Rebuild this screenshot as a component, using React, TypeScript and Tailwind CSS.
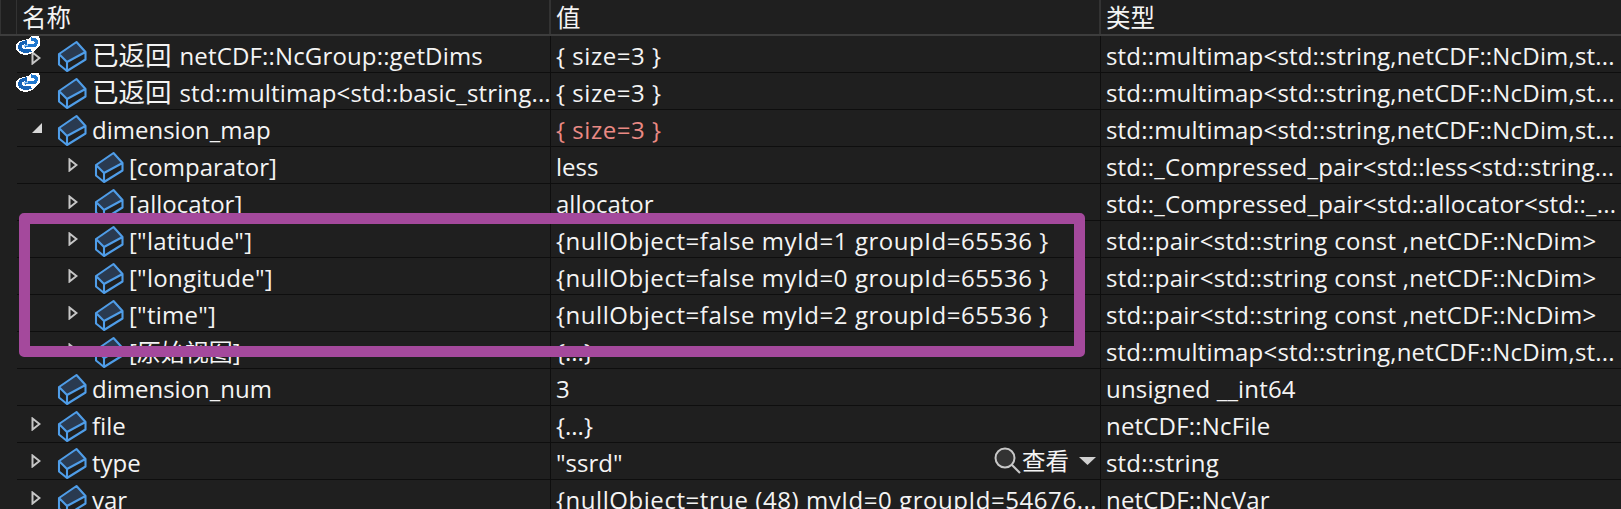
const FONT = "font-['Open_Sans','Noto_Sans_CJK_SC',sans-serif]";

function Cube() {
  return (
    <svg width="30" height="32" viewBox="0 0 30 32" className="mt-[4px] block shrink-0">
      <path d="M2 14 L19.5 2 L28.5 12 L10 22 Z" fill="#2a3a50" />
      <path d="M2 14 L19.5 2 L28.5 12 L28.5 19.5 L10 31 L2 24.5 Z M2 14 L10 22 L28.5 12 M10 22 L10 31" fill="none" stroke="#4f9de8" strokeWidth="2.1" strokeLinejoin="round" />
    </svg>
  );
}

function Closed() {
  return (
    <svg width="10" height="14" viewBox="0 0 10 14" className="block">
      <path d="M1.5 1.5 L8.5 7 L1.5 12.5 Z" fill="none" stroke="#c6c6c6" strokeWidth="2" />
    </svg>
  );
}

function Opened() {
  return (
    <svg width="12" height="12" viewBox="0 0 12 12" className="block">
      <path d="M11 1 L11 11 L1 11 Z" fill="#d8d8d8" />
    </svg>
  );
}

function ReturnIcon() {
  return (
    <svg width="24" height="19" viewBox="0 0 24 19" className="block" shapeRendering="crispEdges">
      <path d="M0 9 L2 6 L7 4 L13 3 L15 0 L23 0 L24 3 L24 9 L20 13 L16 17 L10 19 L4 18 L0 14 Z" fill="#fff" />
      <path d="M11 6 C6 6 3 9 4 12 C5 15 10 16 15 14" fill="none" stroke="#1763b5" strokeWidth="3.6" />
      <path d="M9 10 L19 9 C22 6 20 3 15 3" fill="none" stroke="#1f78d0" strokeWidth="3.2" />
      <path d="M8 10 L12 9" stroke="#9cc6ee" strokeWidth="1.5" />
    </svg>
  );
}

type Row = {
  name: string;
  cn?: string;
  value: string;
  type: string;
  level: 1 | 2;
  ctl: "open" | "closed" | "none";
  ret?: "arrow" | "plain";
  red?: boolean;
  view?: boolean;
  wide?: boolean;
  pair?: boolean;
};

const MM = "std::multimap<std::string,netCDF::NcDim,st...";
const PAIR = "std::pair<std::string const ,netCDF::NcDim>";

const rows: Row[] = [
  { cn: "已返回", name: "netCDF::NcGroup::getDims", value: "{ size=3 }", type: MM, level: 1, ctl: "none", ret: "arrow", wide: true },
  { cn: "已返回", name: "std::multimap<std::basic_string...", value: "{ size=3 }", type: MM, level: 1, ctl: "none", ret: "plain", wide: true },
  { name: "dimension_map", value: "{ size=3 }", type: MM, level: 1, ctl: "open", red: true, wide: true },
  { name: "[comparator]", value: "less", type: "std::_Compressed_pair<std::less<std::string...", level: 2, ctl: "closed" },
  { name: "[allocator]", value: "allocator", type: "std::_Compressed_pair<std::allocator<std::_...", level: 2, ctl: "closed" },
  { name: '["latitude"]', value: "{nullObject=false myId=1 groupId=65536 }", type: PAIR, level: 2, ctl: "closed", wide: true, pair: true },
  { name: '["longitude"]', value: "{nullObject=false myId=0 groupId=65536 }", type: PAIR, level: 2, ctl: "closed", wide: true, pair: true },
  { name: '["time"]', value: "{nullObject=false myId=2 groupId=65536 }", type: PAIR, level: 2, ctl: "closed", wide: true, pair: true },
  { name: "[原始视图]", value: "{...}", type: MM, level: 2, ctl: "closed" },
  { name: "dimension_num", value: "3", type: "unsigned __int64", level: 1, ctl: "none" },
  { name: "file", value: "{...}", type: "netCDF::NcFile", level: 1, ctl: "closed" },
  { name: "type", value: '"ssrd"', type: "std::string", level: 1, ctl: "closed", view: true },
  { name: "var", value: "{nullObject=true (48) myId=0 groupId=54676...", type: "netCDF::NcVar", level: 1, ctl: "closed", wide: true },
];

function TableRow({ r }: { r: Row }) {
  return (
    <div className="flex h-[37px] shrink-0">
      <div className="relative w-[17px] shrink-0">
        {r.ret && (
          <div className="absolute left-[16px] top-[0px] z-10">
            <ReturnIcon />
          </div>
        )}
        {r.ret === "arrow" && (
          <div className="absolute left-[31px] top-[15px]">
            <Closed />
          </div>
        )}
      </div>
      <div className="flex flex-1 border-b border-[#0e0e0e]">
        <div className="flex w-[534px] shrink-0 items-center overflow-hidden border-r border-[#0e0e0e]">
          <div className={r.level === 1 ? "flex w-[40px] shrink-0 items-center pl-[14px]" : "flex w-[77px] shrink-0 items-center pl-[51px]"}>
            {r.ctl === "closed" && <Closed />}
            {r.ctl === "open" && <Opened />}
          </div>
          <Cube />
          <span className="ml-[5px] mt-[3px] whitespace-nowrap text-[24px] leading-[32px]">
            {r.cn && <span className="mr-[8px] text-[26.5px]">{r.cn}</span>}
            <span className={r.cn ? "tracking-[0.15px]" : r.name.startsWith('["') ? "tracking-[0.25px]" : ""}>{r.name}</span>
          </span>
        </div>
        <div className="relative flex w-[550px] shrink-0 items-center overflow-hidden border-r border-[#0e0e0e] pl-[5px]">
          <span
            className={
              r.red
                ? "mt-[3px] whitespace-nowrap text-[24px] leading-[32px] tracking-[0.55px] text-[#ea8a84]"
                : r.wide
                  ? "mt-[3px] whitespace-nowrap text-[24px] leading-[32px] tracking-[0.55px]"
                  : "mt-[3px] whitespace-nowrap text-[24px] leading-[32px]"
            }
          >
            {r.value}
          </span>
          {r.view && (
            <div className="absolute right-[4px] top-[3px] flex items-center">
              <svg width="27" height="28" viewBox="0 0 27 28" className="block">
                <circle cx="11" cy="11" r="9.5" fill="#333" stroke="#c8c8c8" strokeWidth="2" />
                <path d="M18 18 L26 26" stroke="#c8c8c8" strokeWidth="2.2" />
              </svg>
              <span className="ml-[1px] text-[23.5px] leading-[30px]">查看</span>
              <svg width="17" height="8" viewBox="0 0 17 8" className="ml-[10px] block">
                <path d="M0 0 L17 0 L8.5 8 Z" fill="#d0d0d0" />
              </svg>
            </div>
          )}
        </div>
        <div className="flex min-w-0 flex-1 items-center overflow-hidden pl-[5px]">
          <span className={r.pair ? "mt-[3px] whitespace-nowrap text-[24px] leading-[32px] tracking-[0.28px]" : "mt-[3px] whitespace-nowrap text-[24px] leading-[32px] tracking-[0.18px]"}>
            {r.type}
          </span>
        </div>
      </div>
    </div>
  );
}

export default function App() {
  return (
    <div className={`relative flex h-[509px] w-[1621px] flex-col overflow-hidden bg-[#1f1f1f] text-[#f4f4f4] ${FONT}`}>
      <div className="flex h-[36px] shrink-0 border-b-2 border-[#3d3d3d] text-[24.5px] leading-[36px]">
        <div className="w-[17px] shrink-0 border-x border-[#333]" />
        <div className="w-[534px] shrink-0 border-r-2 border-[#333] pl-[5px]">名称</div>
        <div className="w-[550px] shrink-0 border-r-2 border-[#333] pl-[5px]">值</div>
        <div className="flex-1 pl-[5px]">类型</div>
      </div>
      {rows.map((r) => (
        <TableRow key={r.name} r={r} />
      ))}
      <div className="absolute left-[19px] top-[213px] h-[144px] w-[1066px] rounded-[5px] border-[11px] border-[#a4499c]" />
    </div>
  );
}
